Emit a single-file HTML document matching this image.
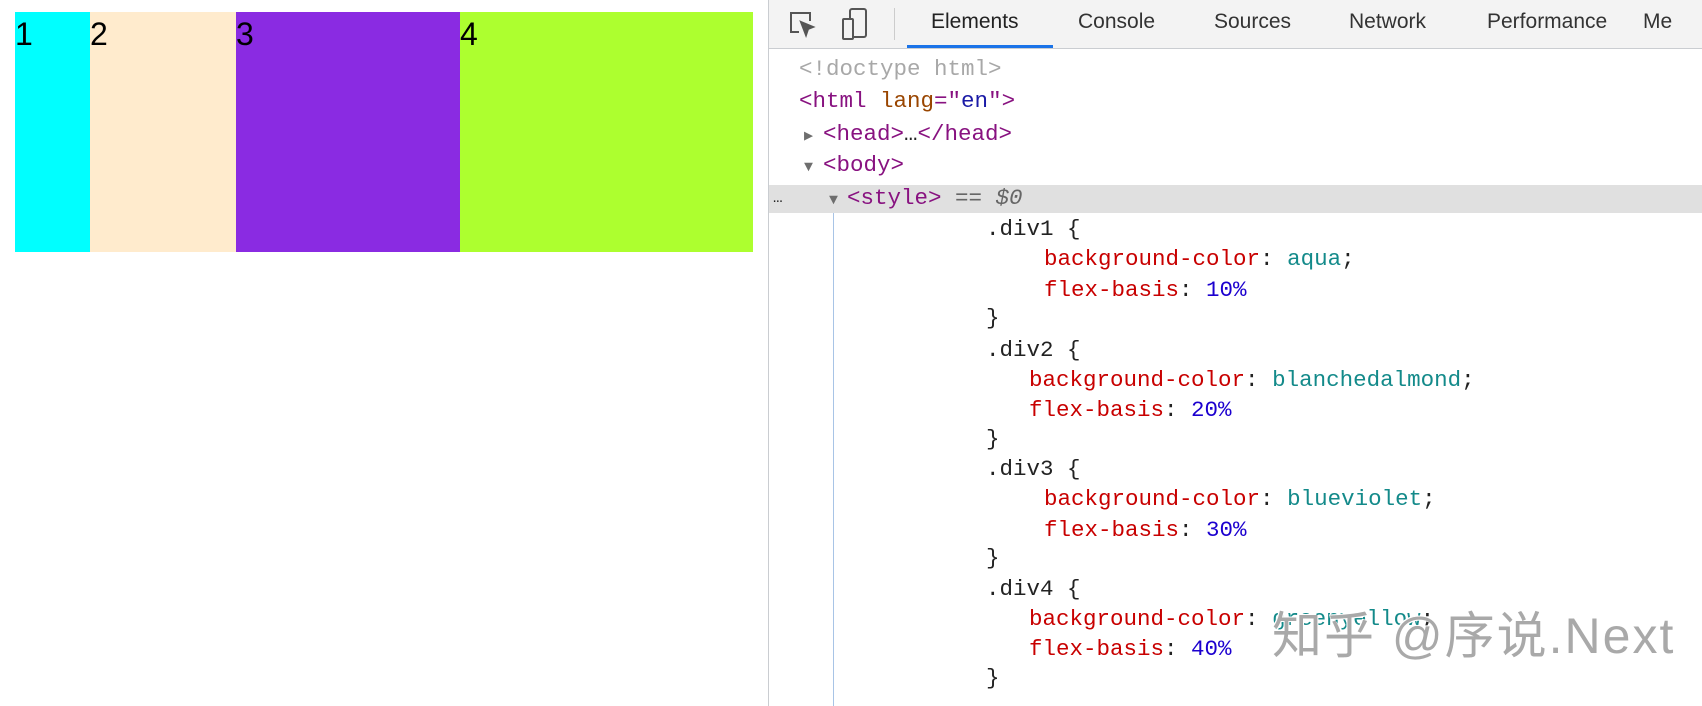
<!DOCTYPE html>
<html><head><meta charset="utf-8"><style>
html,body{margin:0;padding:0;width:1702px;height:706px;overflow:hidden;background:#fff;position:relative;font-family:"Liberation Sans",sans-serif}
.b{position:absolute;top:12px;height:240px;font-size:32px;line-height:44px;color:#000}
.tabs{position:absolute;left:769px;top:0;width:933px;height:48px;background:#f3f3f3;border-bottom:1px solid #cacdd1}
.vd{position:absolute;left:768px;top:0;width:1px;height:706px;background:#cacdd1}
.tab{position:absolute;top:10px;font-size:21px;color:#333}
.r{position:absolute;font-family:"Liberation Mono",monospace;font-size:22.5px;white-space:pre;line-height:30px;color:#222}
.t{color:#881280}.a{color:#994500}.v{color:#1a1aa6}.g{color:#a8a8a8}.p{color:#c80000}.c{color:#138a8a}.n{color:#1c00cf}
.tri{color:#6e6e6e;font-size:15px}
</style></head><body>
<div class="b" style="left:15px;width:75px;background:#00ffff">1</div>
<div class="b" style="left:90px;width:146px;background:#ffebcd">2</div>
<div class="b" style="left:236px;width:224px;background:#8a2be2">3</div>
<div class="b" style="left:460px;width:293px;background:#adff2f">4</div>
<div class="vd"></div>
<div class="tabs"></div>
<svg style="position:absolute;left:788px;top:10px" width="30" height="30" viewBox="0 0 30 30" fill="none" stroke="#555" stroke-width="2"><path d="M11 22H3V3h19v8"/><path d="M13 12l12 5-5 2-2 6z" fill="#555"/></svg>
<svg style="position:absolute;left:840px;top:7px" width="30" height="34" viewBox="0 0 30 34" fill="none" stroke="#555" stroke-width="2"><rect x="10" y="2" width="16" height="28" rx="2"/><rect x="3" y="12" width="10" height="20" rx="1" fill="#f3f3f3"/></svg>
<div style="position:absolute;left:894px;top:8px;width:1px;height:32px;background:#ccc"></div>
<div class="tab" style="left:931px;color:#222">Elements</div>
<div class="tab" style="left:1078px">Console</div>
<div class="tab" style="left:1214px">Sources</div>
<div class="tab" style="left:1349px">Network</div>
<div class="tab" style="left:1487px">Performance</div>
<div class="tab" style="left:1643px">Me</div>
<div style="position:absolute;left:907px;top:45px;width:146px;height:3px;background:#1a73e8"></div>
<div style="position:absolute;left:769px;top:185px;width:933px;height:28px;background:#e0e0e0"></div>
<div style="position:absolute;left:833px;top:213px;width:1px;height:493px;background:#a8c4e6"></div>
<div class="r g" style="left:799px;top:54px">&lt;!doctype html&gt;</div>
<div class="r" style="left:799px;top:86px"><span class="t">&lt;html </span><span class="a">lang</span><span class="t">="</span><span class="v">en</span><span class="t">"&gt;</span></div>
<div class="r" style="left:804px;top:119px"><span class="tri">▶</span></div>
<div class="r t" style="left:823px;top:119px">&lt;head&gt;<span style="color:#222">…</span>&lt;/head&gt;</div>
<div class="r" style="left:804px;top:150px"><span class="tri">▼</span></div>
<div class="r t" style="left:823px;top:150px">&lt;body&gt;</div>
<div class="r" style="left:773px;top:183px;font-size:16px">…</div>
<div class="r" style="left:829px;top:183px"><span class="tri">▼</span></div>
<div class="r" style="left:847px;top:183px"><span class="t">&lt;style&gt;</span> <span style="color:#666">== <i>$0</i></span></div>
<div class="r" style="left:986px;top:214px">.div1 {</div>
<div class="r" style="left:1044px;top:244px"><span class="p">background-color</span>: <span class="c">aqua</span>;</div>
<div class="r" style="left:1044px;top:275px"><span class="p">flex-basis</span>: <span class="n">10%</span></div>
<div class="r" style="left:986px;top:303px">}</div>
<div class="r" style="left:986px;top:335px">.div2 {</div>
<div class="r" style="left:1029px;top:365px"><span class="p">background-color</span>: <span class="c">blanchedalmond</span>;</div>
<div class="r" style="left:1029px;top:395px"><span class="p">flex-basis</span>: <span class="n">20%</span></div>
<div class="r" style="left:986px;top:424px">}</div>
<div class="r" style="left:986px;top:454px">.div3 {</div>
<div class="r" style="left:1044px;top:484px"><span class="p">background-color</span>: <span class="c">blueviolet</span>;</div>
<div class="r" style="left:1044px;top:515px"><span class="p">flex-basis</span>: <span class="n">30%</span></div>
<div class="r" style="left:986px;top:543px">}</div>
<div class="r" style="left:986px;top:574px">.div4 {</div>
<div class="r" style="left:1029px;top:604px"><span class="p">background-color</span>: <span class="c">greenyellow</span>;</div>
<div class="r" style="left:1029px;top:634px"><span class="p">flex-basis</span>: <span class="n">40%</span></div>
<div class="r" style="left:986px;top:663px">}</div>
<div style="position:absolute;left:1272px;top:604px;font-family:'Liberation Sans','Noto Sans CJK SC',sans-serif;font-size:50px;letter-spacing:2px;line-height:64px;color:rgba(160,160,160,0.9);text-shadow:1px 1px 0 #fff,-1px -1px 0 #fff;white-space:nowrap">知乎 @序说.Next</div>
</body></html>
